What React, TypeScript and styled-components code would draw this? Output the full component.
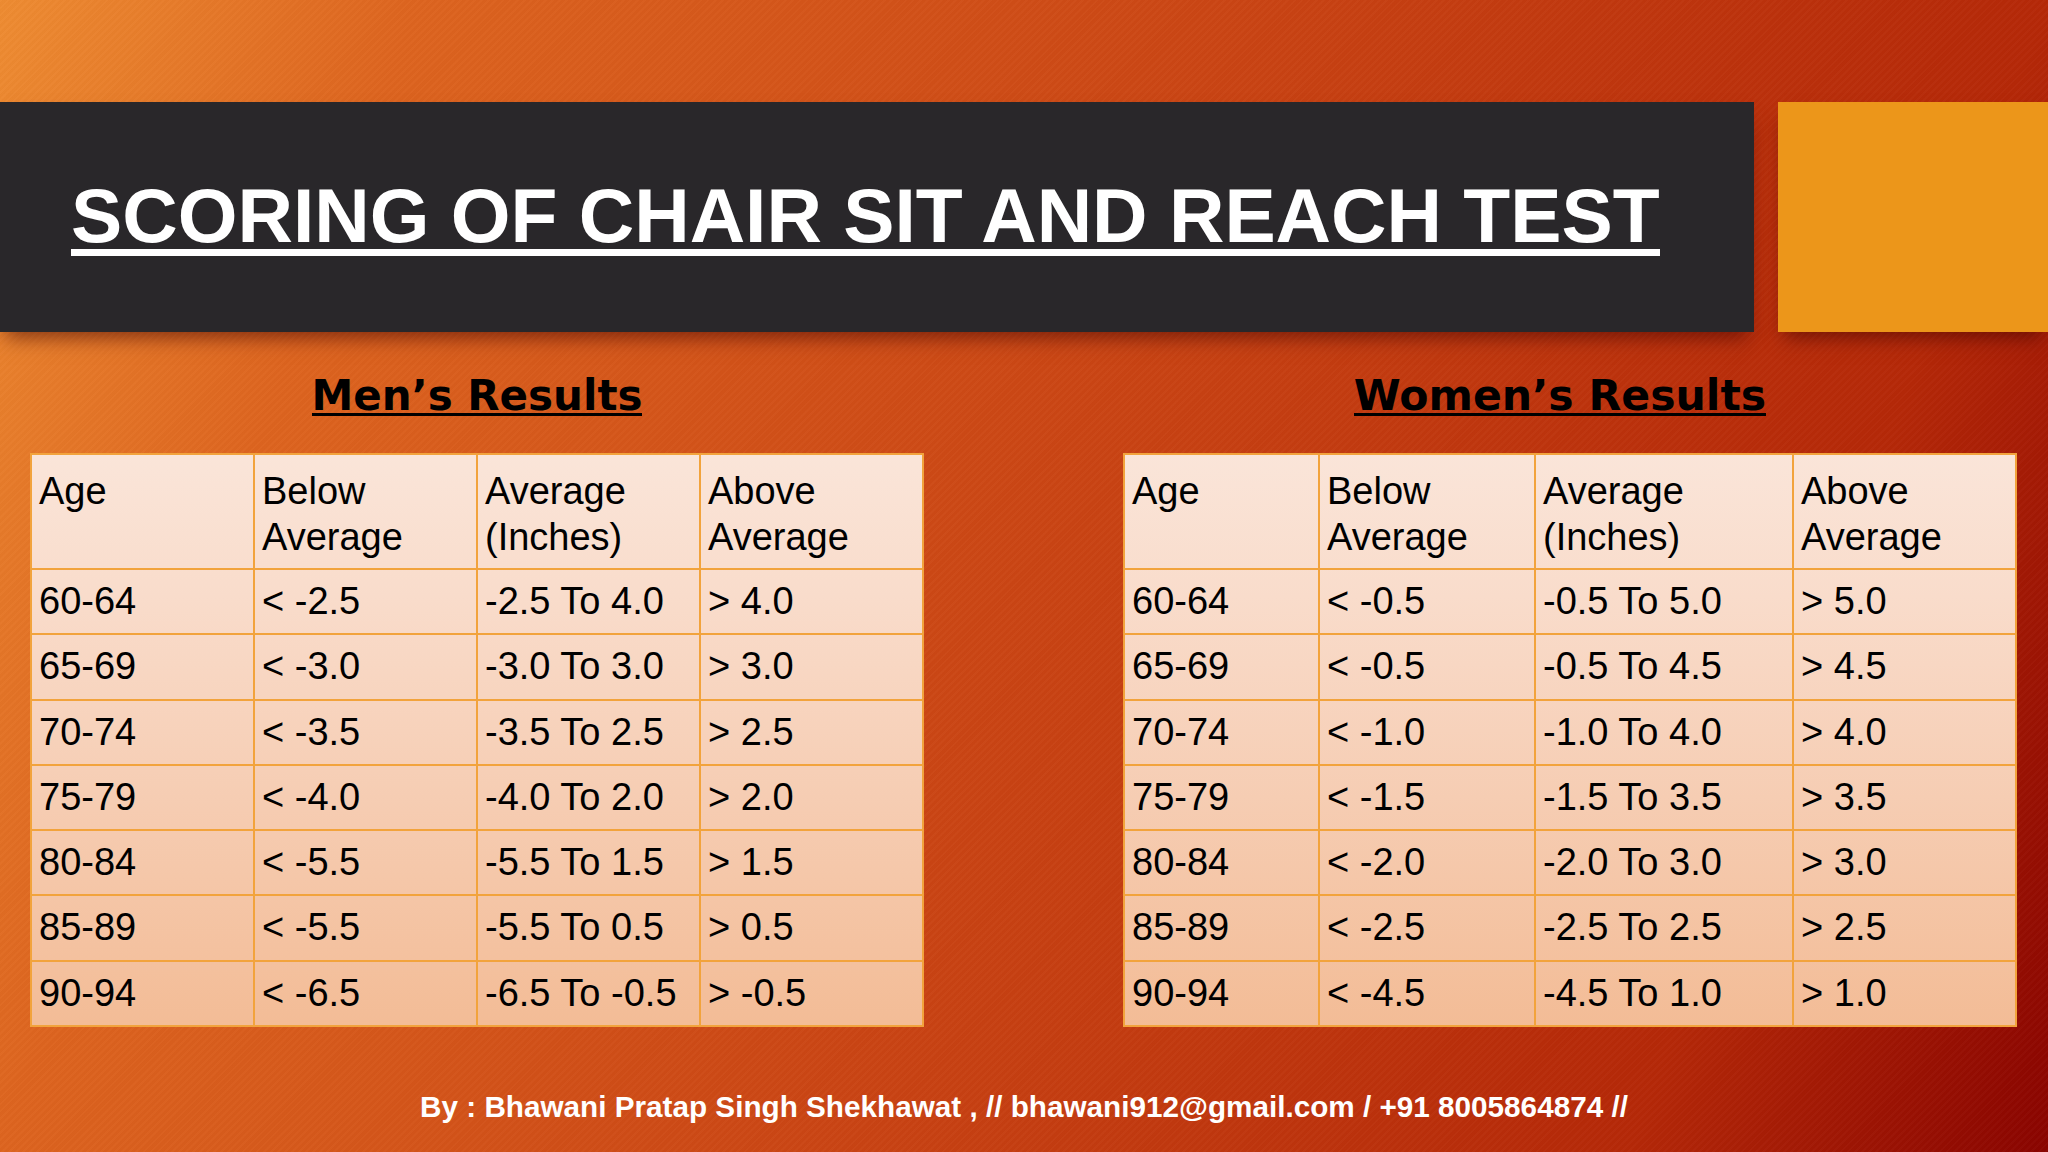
import React from 'react';
import styled, { createGlobalStyle } from 'styled-components';

const GlobalStyle = createGlobalStyle`
  html, body { margin: 0; padding: 0; }
  body { width: 2048px; height: 1152px; overflow: hidden; background: #8a0a00; }
  * { box-sizing: border-box; }
`;

const Slide = styled.div`
  width: 2048px;
  height: 1152px;
  overflow: hidden;
  display: flex;
  flex-direction: column;
  font-family: "Liberation Sans", Arial, sans-serif;
  background:
    repeating-linear-gradient(135deg, rgba(255, 255, 255, 0.02) 0px, rgba(255, 255, 255, 0.02) 2px, rgba(0, 0, 0, 0.012) 2px, rgba(0, 0, 0, 0.012) 5px),
    linear-gradient(110deg, #ee8c32 0%, #dd641f 17%, #ca4514 50%, #b52808 83%, #8a0400 100%);
`;

const HeaderBand = styled.header`
  margin-top: 102px;
  height: 230px;
  display: flex;
  gap: 24px;
`;

const TitleBar = styled.div`
  width: 1754px;
  height: 100%;
  background: #29272a;
  padding: 79px 0 0 71px;
  box-shadow: 0 12px 18px -6px rgba(60, 0, 0, 0.55);
`;

const Title = styled.h1`
  display: inline-block;
  margin: 0;
  font-family: "Liberation Sans", Arial, sans-serif;
  font-weight: 700;
  font-size: 76.8px;
  line-height: 68px;
  color: #ffffff;
  border-bottom: 7px solid #ffffff;
  white-space: nowrap;
`;

const AccentBlock = styled.div`
  flex: 1;
  height: 100%;
  background: #ec961a;
  box-shadow: 0 12px 18px -6px rgba(60, 0, 0, 0.55);
`;

const Panels = styled.main`
  display: flex;
  gap: 201px;
  padding: 46px 32px 0 31px;
`;

const Panel = styled.section`
  width: 892px;
  display: flex;
  flex-direction: column;
  align-items: center;
`;

const SectionHeading = styled.h2<{ $shift?: number }>`
  display: inline-block;
  margin: 0 ${(p) => (p.$shift ?? 0) * 2}px 37px 0;
  font-family: "DejaVu Sans", Verdana, sans-serif;
  font-weight: 700;
  font-size: ${(p) => (p.$shift ? '42.6px' : '42px')};
  line-height: 35px;
  color: #000000;
  border-bottom: 3px solid #000000;
  white-space: nowrap;
`;

const Table = styled.table`
  width: 892px;
  border-collapse: collapse;
  table-layout: fixed;
  background: linear-gradient(180deg, #fae5d9 0%, #f9dccb 25%, #f6cdb3 60%, #f3bc96 100%);
  border: 2px solid #f2a33c;
`;

const Row = styled.tr<{ $head?: boolean }>`
  height: ${(p) => (p.$head ? '115px' : '65.3px')};
`;

const Cell = styled.td<{ $head?: boolean }>`
  border: 2px solid #f2a33c;
  vertical-align: top;
  padding: ${(p) => (p.$head ? '13px' : '8px')} 6px 0 7px;
  font-family: "Liberation Sans", Arial, sans-serif;
  font-weight: 400;
  font-size: 38px;
  line-height: 46px;
  color: #000000;
  white-space: nowrap;
`;

const Footer = styled.footer`
  margin-top: 63px;
  text-align: center;
  font-family: "Liberation Sans", Arial, sans-serif;
  font-weight: 700;
  font-size: 29.7px;
  line-height: 34px;
  color: #ffffff;
`;

type TableData = {
  title: string;
  shift?: number;
  widths: number[];
  rows: string[][];
};

const headers: React.ReactNode[] = [
  'Age',
  <>Below<br />Average</>,
  <>Average<br />(Inches)</>,
  <>Above<br />Average</>,
];

const tables: TableData[] = [
  {
    title: 'Men’s Results',
    widths: [223, 223, 223, 223],
    rows: [
      ['60-64', '< -2.5', '-2.5 To 4.0', '> 4.0'],
      ['65-69', '< -3.0', '-3.0 To 3.0', '> 3.0'],
      ['70-74', '< -3.5', '-3.5 To 2.5', '> 2.5'],
      ['75-79', '< -4.0', '-4.0 To 2.0', '> 2.0'],
      ['80-84', '< -5.5', '-5.5 To 1.5', '> 1.5'],
      ['85-89', '< -5.5', '-5.5 To 0.5', '> 0.5'],
      ['90-94', '< -6.5', '-6.5 To -0.5', '> -0.5'],
    ],
  },
  {
    title: 'Women’s Results',
    shift: 10,
    widths: [195, 216, 258, 223],
    rows: [
      ['60-64', '< -0.5', '-0.5 To 5.0', '> 5.0'],
      ['65-69', '< -0.5', '-0.5 To 4.5', '> 4.5'],
      ['70-74', '< -1.0', '-1.0 To 4.0', '> 4.0'],
      ['75-79', '< -1.5', '-1.5 To 3.5', '> 3.5'],
      ['80-84', '< -2.0', '-2.0 To 3.0', '> 3.0'],
      ['85-89', '< -2.5', '-2.5 To 2.5', '> 2.5'],
      ['90-94', '< -4.5', '-4.5 To 1.0', '> 1.0'],
    ],
  },
];

export default function App() {
  return (
    <>
      <GlobalStyle />
      <Slide>
        <HeaderBand>
          <TitleBar>
            <Title>SCORING OF CHAIR SIT AND REACH TEST</Title>
          </TitleBar>
          <AccentBlock />
        </HeaderBand>
        <Panels>
          {tables.map((t) => (
            <Panel key={t.title}>
              <SectionHeading $shift={t.shift}>{t.title}</SectionHeading>
              <Table>
                <colgroup>
                  {t.widths.map((w, i) => (
                    <col key={i} style={{ width: `${w}px` }} />
                  ))}
                </colgroup>
                <tbody>
                  <Row $head>
                    {headers.map((h, i) => (
                      <Cell $head key={i}>{h}</Cell>
                    ))}
                  </Row>
                  {t.rows.map((r) => (
                    <Row key={r[0]}>
                      {r.map((c, i) => (
                        <Cell key={i}>{c}</Cell>
                      ))}
                    </Row>
                  ))}
                </tbody>
              </Table>
            </Panel>
          ))}
        </Panels>
        <Footer>By : Bhawani Pratap Singh Shekhawat , // bhawani912@gmail.com / +91 8005864874 //</Footer>
      </Slide>
    </>
  );
}
